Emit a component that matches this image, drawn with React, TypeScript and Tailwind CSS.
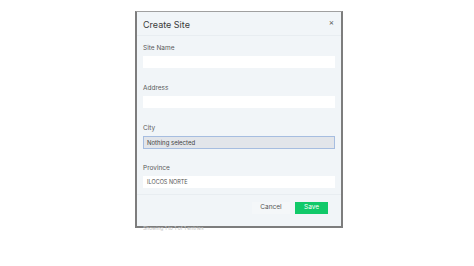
export default function App() {
  const fields = [
    { label: "Site Name", value: "" },
    { label: "Address", value: "" },
  ];

  return (
    <div
      className="w-[474px] h-[266px] bg-white"
      style={{ fontFamily: "Inter, 'Noto Sans', sans-serif" }}
    >
      <div className="pt-[11px] pl-[135px]">
        {/* Modal */}
        <div className="w-[208px] h-[217px] border-2 border-t border-[#7d7d7d] border-t-[#a0a0a0] bg-[#f1f5f8] flex flex-col">
          {/* Header */}
          <div className="shrink-0 h-[24px] flex items-center justify-between pl-[6px] pr-[7px] border-b border-[#e8edf1]">
            <span className="text-[9px] text-[#3a3a3a] leading-none mt-[1px]">Create Site</span>
            <span className="text-[8px] text-[#555] leading-none -mt-[3px]">×</span>
          </div>

          {/* Body */}
          <div className="shrink-0 flex flex-col pt-[6px] pb-[6px] px-[6px]">
            {fields.map((f) => (
              <div key={f.label} className="h-[40px] flex flex-col">
                <div className="h-[12px] pt-[2px] flex items-center text-[6.5px] text-[#5a5a5a]">{f.label}</div>
                <div className="mt-[2px] h-[12px] bg-white" />
              </div>
            ))}

            <div className="h-[40px] flex flex-col">
              <div className="h-[12px] pt-[2px] flex items-center text-[6.5px] text-[#5a5a5a]">City</div>
              <div className="mt-[2px] h-[13px] bg-[#e2e5ea] border border-[#a6bde0] flex items-center pl-[3px] text-[6px] text-[#444]">
                Nothing selected
              </div>
            </div>

            <div className="flex flex-col">
              <div className="h-[12px] pt-[2px] flex items-center text-[6.5px] text-[#5a5a5a]">Province</div>
              <div className="mt-[2px] h-[12px] bg-white flex items-center pl-[4px] text-[5.5px] text-[#555]">
                ILOCOS NORTE
              </div>
            </div>
          </div>

          {/* Footer */}
          <div className="flex-1 border-t border-[#e8edf1] flex items-start justify-end gap-[5px] pr-[13px] pt-[7px]">
            <button className="h-[12px] w-[38px] bg-[#f4f7f9] text-[6.5px] text-[#555] flex items-center justify-center">
              Cancel
            </button>
            <button className="h-[12px] w-[33px] bg-[#11c969] text-[6.5px] text-white flex items-center justify-center">
              Save
            </button>
          </div>
        </div>
        <div className="-mt-[2px] pl-[8px] text-[5px] text-[#c4c4c4] leading-none">
          Showing 1 to 1 of 1 entries
        </div>
      </div>
    </div>
  );
}
